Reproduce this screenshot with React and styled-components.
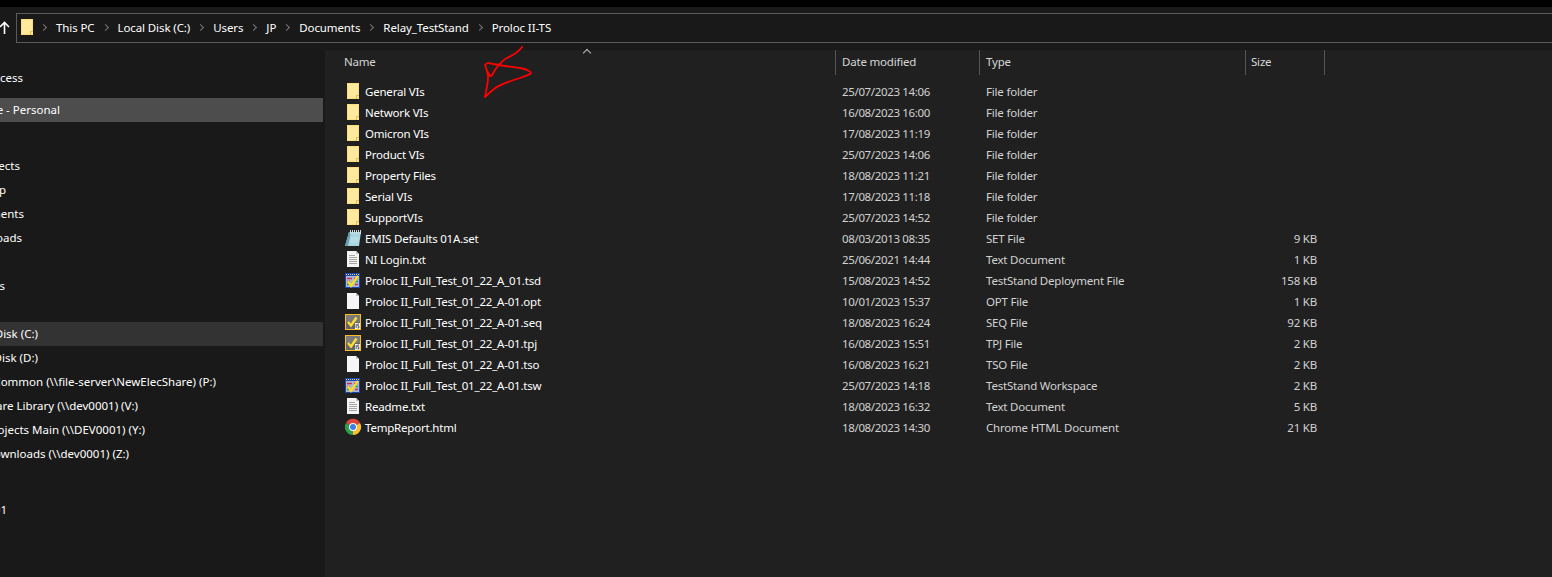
import React from 'react';
import styled, { createGlobalStyle } from 'styled-components';

const GlobalStyle = createGlobalStyle`
  html, body {
    margin: 0;
    height: 100%;
    background: #191919;
    overflow: hidden;
  }
  #root {
    height: 100%;
  }
`;

const Page = styled.div`
  position: relative;
  width: 1552px;
  height: 577px;
  overflow: hidden;
  display: flex;
  flex-direction: column;
  background: #191919;
  color: #fff;
  font-family: "Noto Sans", "Open Sans", sans-serif;
  font-size: 11.5px;
  letter-spacing: -0.2px;
`;

const TopStrip = styled.div`
  height: 7px;
  background: #000;
`;

const AddressRow = styled.div`
  height: 43px;
  display: flex;
  padding-top: 6px;
  box-sizing: border-box;
  align-items: flex-start;
`;

const UpButton = styled.div`
  width: 16px;
  height: 30px;
  display: flex;
  align-items: center;
  svg {
    display: block;
  }
`;

const AddressBox = styled.div`
  flex: 1;
  height: 30px;
  box-sizing: border-box;
  border: 1px solid #5a5a5a;
  border-right: none;
  display: flex;
  align-items: center;
  padding: 0 0 2px 1px;

  > svg {
    margin-right: -3px;
  }
`;

const Crumb = styled.span`
  white-space: nowrap;
  color: #fff;
  letter-spacing: -0.1px;
`;

const Chevron = styled.span`
  width: 4px;
  height: 4px;
  margin: 0 10px 0 8px;
  border-top: 1.5px solid #777;
  border-right: 1.5px solid #777;
  transform: rotate(45deg);
  flex-shrink: 0;
`;

const Main = styled.div`
  flex: 1;
  display: flex;
  min-height: 0;
`;

const Sidebar = styled.nav`
  width: 325px;
  flex-shrink: 0;
  padding-top: 16px;
  padding-right: 2px;
  box-sizing: border-box;
  overflow: hidden;
`;

const NavRow = styled.div`
  height: 24px;
  box-sizing: border-box;
  padding-bottom: 2px;
  margin-top: ${(p) => p.$gap}px;
  display: flex;
  align-items: center;
  background: ${(p) => (p.$active === 'focus' ? '#4d4d4d' : p.$active === 'open' ? '#333' : 'transparent')};
  overflow: hidden;
`;

// right edge of the text is what shows, the start is cut off by the window edge
const NavLabel = styled.span`
  width: ${(p) => p.$end}px;
  flex-shrink: 0;
  display: flex;
  justify-content: flex-end;
  white-space: nowrap;
  letter-spacing: 0;
`;

const ListPane = styled.section`
  flex: 1;
  background: #202020;
  display: flex;
  flex-direction: column;
`;

const HeaderRow = styled.div`
  position: relative;
  height: 25px;
  margin-bottom: 7px;
  display: grid;
  grid-template-columns: 511px 144px 266px 79px;
  color: #d6d6d6;
`;

const HeaderCell = styled.div`
  box-sizing: border-box;
  display: flex;
  align-items: center;
  padding: 0 0 2px ${(p) => p.$pad}px;
  border-right: 1px solid #555;
`;

const SortCaret = styled.span`
  position: absolute;
  left: 259px;
  top: 0;
  width: 5px;
  height: 5px;
  border-top: 1px solid #bbb;
  border-left: 1px solid #bbb;
  transform: rotate(45deg);
`;

const FileRow = styled.div`
  height: 21px;
  box-sizing: border-box;
  padding-bottom: 2px;
  display: grid;
  grid-template-columns: 511px 144px 266px 79px;
  align-items: center;
`;

const NameCell = styled.div`
  display: flex;
  align-items: center;
  padding-left: 19px;
  white-space: nowrap;
  color: #fff;
`;

const IconSlot = styled.span`
  width: 21px;
  height: 19px;
  display: flex;
  align-items: flex-start;
  flex-shrink: 0;
  svg {
    display: block;
  }
`;

const DetailCell = styled.div`
  padding-left: 6px;
  color: #d2d2d2;
  white-space: nowrap;
  letter-spacing: ${(p) => (p.$tight ? '-0.35px' : 'inherit')};
`;

const SizeCell = styled.div`
  padding-right: 8px;
  text-align: right;
  color: #d2d2d2;
`;

const Scribble = styled.svg`
  position: absolute;
  left: 480px;
  top: 44px;
  pointer-events: none;
`;

const FolderIcon = () => (
  <svg width="18" height="18" viewBox="0 0 18 18">
    <rect x="3" y="1" width="12" height="16" fill="#ffdc7c" />
    <rect x="4" y="2" width="10" height="14" fill="#ffe99c" />
    <path d="M12 17v-4h3v4z" fill="#e3bd55" />
    <path d="M13 17v-3h2v3z" fill="#ffe490" />
  </svg>
);

const NotepadIcon = () => (
  <svg width="18" height="18" viewBox="0 0 18 18">
    <path d="M5 3h12l-2 14H1z" fill="#a9d6de" />
    <path d="M5 3L1 17h3l3-14z" fill="#6a9cb0" />
    <path d="M6.5 1v4M8.5 1v4M10.5 1v4M12.5 1v4M14.5 1v4M16.5 1v4" stroke="#cfdde3" strokeWidth="1" />
    <path d="M7 9h8M6.5 11h8M6 13h8" stroke="#c4e6ec" strokeWidth="1" />
  </svg>
);

const TextIcon = () => (
  <svg width="18" height="18" viewBox="0 0 18 18">
    <path d="M3 1h9l3 3v13H3z" fill="#f4f4f4" />
    <path d="M12 1l3 3h-3z" fill="#c4c4c4" />
    <path d="M5 5.5h6M5 7.5h8M5 9.5h8M5 11.5h8M5 13.5h8" stroke="#a6a6a6" strokeWidth="1" />
  </svg>
);

const BlankIcon = () => (
  <svg width="18" height="18" viewBox="0 0 18 18">
    <path d="M3 1h9l3 3v13H3z" fill="#f6f6f6" />
    <path d="M12 1l3 3h-3z" fill="#c4c4c4" />
  </svg>
);

const WorkspaceIcon = () => (
  <svg width="18" height="18" viewBox="0 0 18 18">
    <rect x="1" y="2" width="15" height="15" fill="#1a45b0" />
    <rect x="2" y="5" width="13" height="11" fill="#a9b8d8" />
    <path d="M2 3.5h13" stroke="#f3d64a" strokeWidth="1" strokeDasharray="1 1" />
    <path d="M3 7.5h5M3 10.5h3M10 7.5h4M11 13.5h3" stroke="#d0304a" strokeWidth="1.6" />
    <path d="M3 13.5h2M10 10.5h4" stroke="#2f9e57" strokeWidth="1.6" />
    <path d="M4 10l3 5 7-10" fill="none" stroke="#ffdf1f" strokeWidth="2.2" />
  </svg>
);

const SequenceIcon = () => (
  <svg width="18" height="18" viewBox="0 0 18 18">
    <rect x="1.5" y="1.5" width="15" height="15" fill="#666" stroke="#ffbe1e" strokeWidth="1" />
    <rect x="2" y="2" width="14" height="7" fill="#7a7a7a" />
    <path d="M4 9l3 3.5 5.5-8" fill="none" stroke="#ffdc32" strokeWidth="2.4" />
    <rect x="11" y="10" width="5" height="6" fill="#f2f2f2" />
    <path d="M12.2 11v4M15 11h-1.2v2h1v2h-1.2" fill="none" stroke="#333" strokeWidth=".8" />
  </svg>
);

const ChromeIcon = () => (
  <svg width="18" height="18" viewBox="0 0 18 18">
    <path d="M9 9L2 5a8 8 0 0 1 14 0z" fill="#dd4437" />
    <path d="M9 9l7-4a8 8 0 0 1-7 12z" fill="#fbc02d" />
    <path d="M9 9v8A8 8 0 0 1 2 5z" fill="#2e9e4f" />
    <circle cx="9" cy="9" r="4" fill="#fff" />
    <circle cx="9" cy="9" r="3" fill="#3f7fe8" />
  </svg>
);

const ICONS = {
  folder: FolderIcon,
  notepad: NotepadIcon,
  text: TextIcon,
  blank: BlankIcon,
  workspace: WorkspaceIcon,
  sequence: SequenceIcon,
  chrome: ChromeIcon,
};

const crumbs = ['This PC', 'Local Disk (C:)', 'Users', 'JP', 'Documents', 'Relay_TestStand', 'Proloc II-TS'];

const navItems = [
  { label: 'Quick access', end: 23, gap: 0 },
  { label: 'OneDrive - Personal', end: 60, gap: 8, active: 'focus' },
  { label: '3D Objects', end: 20, gap: 32 },
  { label: 'Desktop', end: 6, gap: 0 },
  { label: 'Documents', end: 24, gap: 0 },
  { label: 'Downloads', end: 22, gap: 0 },
  { label: 'Videos', end: 5, gap: 24 },
  { label: 'Local Disk (C:)', end: 38, gap: 24, active: 'open' },
  { label: 'Local Disk (D:)', end: 38, gap: 0 },
  { label: 'Common (\\\\file-server\\NewElecShare) (P:)', end: 216, gap: 0 },
  { label: 'Software Library (\\\\dev0001) (V:)', end: 138, gap: 0 },
  { label: 'Projects Main (\\\\DEV0001) (Y:)', end: 145, gap: 0 },
  { label: 'Downloads (\\\\dev0001) (Z:)', end: 129, gap: 0 },
  { label: 'DEV0001', end: 7, gap: 32 },
];

const files = [
  ['folder', 'General VIs', '25/07/2023 14:06', 'File folder', ''],
  ['folder', 'Network VIs', '16/08/2023 16:00', 'File folder', ''],
  ['folder', 'Omicron VIs', '17/08/2023 11:19', 'File folder', ''],
  ['folder', 'Product VIs', '25/07/2023 14:06', 'File folder', ''],
  ['folder', 'Property Files', '18/08/2023 11:21', 'File folder', ''],
  ['folder', 'Serial VIs', '17/08/2023 11:18', 'File folder', ''],
  ['folder', 'SupportVIs', '25/07/2023 14:52', 'File folder', ''],
  ['notepad', 'EMIS Defaults 01A.set', '08/03/2013 08:35', 'SET File', '9 KB'],
  ['text', 'NI Login.txt', '25/06/2021 14:44', 'Text Document', '1 KB'],
  ['workspace', 'Proloc II_Full_Test_01_22_A_01.tsd', '15/08/2023 14:52', 'TestStand Deployment File', '158 KB'],
  ['blank', 'Proloc II_Full_Test_01_22_A-01.opt', '10/01/2023 15:37', 'OPT File', '1 KB'],
  ['sequence', 'Proloc II_Full_Test_01_22_A-01.seq', '18/08/2023 16:24', 'SEQ File', '92 KB'],
  ['sequence', 'Proloc II_Full_Test_01_22_A-01.tpj', '16/08/2023 15:51', 'TPJ File', '2 KB'],
  ['blank', 'Proloc II_Full_Test_01_22_A-01.tso', '16/08/2023 16:21', 'TSO File', '2 KB'],
  ['workspace', 'Proloc II_Full_Test_01_22_A-01.tsw', '25/07/2023 14:18', 'TestStand Workspace', '2 KB'],
  ['text', 'Readme.txt', '18/08/2023 16:32', 'Text Document', '5 KB'],
  ['chrome', 'TempReport.html', '18/08/2023 14:30', 'Chrome HTML Document', '21 KB'],
];

function App() {
  return (
    <>
      <GlobalStyle />
      <Page>
        <TopStrip />
        <AddressRow>
          <UpButton>
            <svg width="10" height="14" viewBox="0 0 10 14">
              <path d="M4.5 13V2M0 6l4.5-4.5L9 6" fill="none" stroke="#fff" strokeWidth="1.6" />
            </svg>
          </UpButton>
          <AddressBox>
            <FolderIcon />
            {crumbs.map((text) => (
              <React.Fragment key={text}>
                <Chevron />
                <Crumb>{text}</Crumb>
              </React.Fragment>
            ))}
          </AddressBox>
        </AddressRow>
        <Main>
          <Sidebar>
            {navItems.map((item) => (
              <NavRow key={item.label} $gap={item.gap} $active={item.active}>
                <NavLabel $end={item.end}>{item.label}</NavLabel>
              </NavRow>
            ))}
          </Sidebar>
          <ListPane>
            <HeaderRow>
              <HeaderCell $pad={19}>Name</HeaderCell>
              <HeaderCell $pad={6}>Date modified</HeaderCell>
              <HeaderCell $pad={6}>Type</HeaderCell>
              <HeaderCell $pad={5}>Size</HeaderCell>
              <SortCaret />
            </HeaderRow>
            {files.map(([icon, name, date, type, size]) => {
              const Icon = ICONS[icon];
              return (
                <FileRow key={name}>
                  <NameCell>
                    <IconSlot>
                      <Icon />
                    </IconSlot>
                    {name}
                  </NameCell>
                  <DetailCell $tight>{date}</DetailCell>
                  <DetailCell>{type}</DetailCell>
                  <SizeCell>{size}</SizeCell>
                </FileRow>
              );
            })}
          </ListPane>
        </Main>
        <Scribble width="60" height="60" viewBox="0 0 60 60">
          <path
            d="M42 3C38 9 33 11 27 14C21 17 18 22 15 26C13 30 11 33 10 32C8 29 6 25 5 21C7 18 9 19 13 20C23 22 32 23 40 24C47 25 51 28 51 29C50 31 45 32 40 34C30 37 20 40 14 45C10 48 6 52 5 53C6 47 8 40 8 33C8 30 7 27 6 24"
            fill="none"
            stroke="#f00"
            strokeWidth="1.8"
            strokeLinecap="round"
            strokeLinejoin="round"
          />
        </Scribble>
      </Page>
    </>
  );
}

export default App;
